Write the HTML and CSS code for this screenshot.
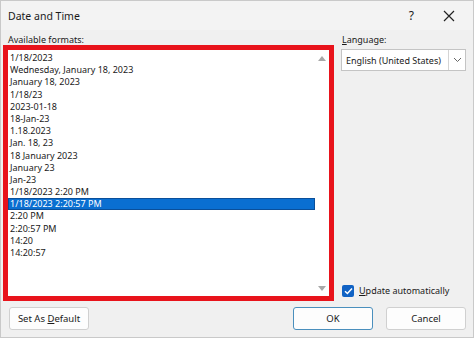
FILE: index.html
```html
<!DOCTYPE html>
<html lang="en">
<head>
    <meta charset="UTF-8">
    <title>Date and Time</title>
    <link rel="stylesheet" href="styles.css">
</head>
<body>
    <div class="dialog">
        <div class="titlebar">
            <div class="title">Date and Time</div>
            <div class="title-icons">
                <span class="help">?</span>
                <svg class="close" width="12" height="12" viewBox="0 0 12 12">
                    <path d="M1 1L11 11M11 1L1 11" stroke="#222" stroke-width="1.2" fill="none"/>
                </svg>
            </div>
        </div>

        <div class="content">
            <div class="left">
                <div class="label">Available formats:</div>
                <div class="highlight">
                    <div class="list">
                        <div class="items">
                            <div class="item">1/18/2023</div>
                            <div class="item">Wednesday, January 18, 2023</div>
                            <div class="item">January 18, 2023</div>
                            <div class="item">1/18/23</div>
                            <div class="item">2023-01-18</div>
                            <div class="item">18-Jan-23</div>
                            <div class="item">1.18.2023</div>
                            <div class="item">Jan. 18, 23</div>
                            <div class="item">18 January 2023</div>
                            <div class="item">January 23</div>
                            <div class="item">Jan-23</div>
                            <div class="item">1/18/2023 2:20 PM</div>
                            <div class="item selected">1/18/2023 2:20:57 PM</div>
                            <div class="item">2:20 PM</div>
                            <div class="item">2:20:57 PM</div>
                            <div class="item">14:20</div>
                            <div class="item">14:20:57</div>
                        </div>
                        <div class="scrollbar">
                            <span class="arrow up"></span>
                            <span class="arrow down"></span>
                        </div>
                    </div>
                </div>
            </div>

            <div class="right">
                <div class="label"><u>L</u>anguage:</div>
                <div class="combo">
                    <span class="combo-text">English (United States)</span>
                    <span class="combo-button">
                        <svg width="9" height="6" viewBox="0 0 9 6">
                            <path d="M1 1L4.5 4.5L8 1" stroke="#666" stroke-width="1" fill="none"/>
                        </svg>
                    </span>
                </div>
                <div class="check-row">
                    <span class="checkbox">
                        <svg width="9" height="8" viewBox="0 0 9 8">
                            <path d="M1 4.2L3.4 6.5L8 1.5" stroke="#fff" stroke-width="1.5" fill="none"/>
                        </svg>
                    </span>
                    <span><u>U</u>pdate automatically</span>
                </div>
            </div>
        </div>

        <div class="footer">
            <button class="btn">Set As <u>D</u>efault</button>
            <div class="footer-right">
                <button class="btn default">OK</button>
                <button class="btn">Cancel</button>
            </div>
        </div>
    </div>
</body>
</html>
```

FILE: styles.css
```css
body {
    margin: 0;
    padding: 0;
    font-family: "Noto Sans", "Open Sans", sans-serif;
    font-size: 9px;
    color: #1a1a1a;
    background-color: #f0f0f0;
}
.dialog {
    width: 474px;
    height: 338px;
    box-sizing: border-box;
    border: 1px solid #c9c9c9;
    background-color: #f0f0f0;
    display: flex;
    flex-direction: column;
}
.titlebar {
    height: 29px;
    display: flex;
    align-items: center;
    justify-content: space-between;
    padding: 0 18px 0 7px;
    box-sizing: border-box;
    background-color: #f3f3f3;
}
.title {
    font-size: 10.5px;
}
.title-icons {
    display: flex;
    align-items: center;
    gap: 29px;
}
.help {
    font-size: 12px;
}
.close {
    display: block;
}
.content {
    display: flex;
    padding: 1px 7px 0 2px;
    height: 270px;
}
.label {
    height: 14px;
    line-height: 18px;
    padding-left: 5px;
}
.left {
    width: 331px;
    display: flex;
    flex-direction: column;
}
.highlight {
    flex: 1;
    border: 5px solid #e8131b;
    background-color: #ffffff;
}
.list {
    display: flex;
    height: 100%;
}
.items {
    flex: 1;
    padding-top: 2px;
}
.item {
    height: 12.2px;
    line-height: 12.2px;
    padding-left: 2px;
    white-space: nowrap;
}
.item.selected {
    background-color: #0a6fd1;
    color: #ffffff;
    border: 1px solid #0a4f9a;
    box-sizing: border-box;
    line-height: 10.2px;
    padding-left: 1px;
}
.scrollbar {
    width: 14px;
    display: flex;
    flex-direction: column;
    justify-content: space-between;
    align-items: center;
    padding: 6px 0 5px;
}
.arrow {
    width: 0;
    height: 0;
    border-left: 4px solid transparent;
    border-right: 4px solid transparent;
}
.arrow.up {
    border-bottom: 5px solid #a8a8a8;
}
.arrow.down {
    border-top: 5px solid #a8a8a8;
}
.right {
    flex: 1;
    margin-left: 7px;
    display: flex;
    flex-direction: column;
}
.right .label {
    padding-left: 1px;
}
.combo {
    margin-top: 4px;
    height: 22px;
    box-sizing: border-box;
    border: 1px solid #c4c4c4;
    background-color: #ffffff;
    display: flex;
    align-items: center;
}
.combo-text {
    flex: 1;
    padding-left: 4px;
}
.combo-button {
    width: 16px;
    height: 100%;
    border-left: 1px solid #d4d4d4;
    display: flex;
    align-items: center;
    justify-content: center;
}
.check-row {
    margin-top: auto;
    margin-bottom: 4px;
    display: flex;
    align-items: center;
    gap: 5px;
    padding-left: 1px;
}
.checkbox {
    width: 12px;
    height: 12px;
    border-radius: 2px;
    background-color: #1062c4;
    display: flex;
    align-items: center;
    justify-content: center;
}
.footer {
    display: flex;
    justify-content: space-between;
    padding: 6px 7px 0 8px;
}
.footer-right {
    display: flex;
    gap: 13px;
}
.btn {
    width: 80px;
    height: 23px;
    box-sizing: border-box;
    border: 1px solid #d0d0d0;
    border-radius: 3px;
    background-color: #fdfdfd;
    font-family: "Noto Sans", "Open Sans", sans-serif;
    font-size: 9.5px;
    color: #1a1a1a;
    padding: 0;
}
.btn.default {
    border-color: #4a8fbd;
}
```
